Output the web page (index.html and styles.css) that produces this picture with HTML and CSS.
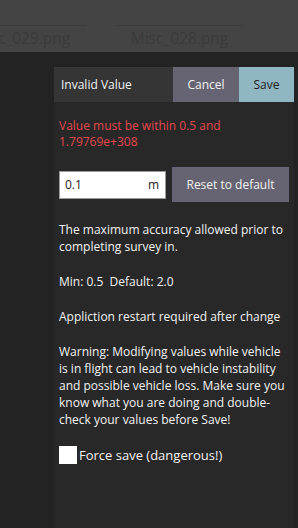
FILE: index.html
```html
<!DOCTYPE html>
<html lang="en">
<head>
  <meta charset="UTF-8">
  <title>Parameter Editor</title>
  <link rel="stylesheet" href="styles.css">
</head>
<body>

  <div class="topbar">
    <div class="thumb thumb-a"><span>c_029.png</span></div>
    <div class="thumb thumb-b"><span>Misc_028.png</span></div>
  </div>

  <div class="dialog">
    <div class="dialog-header">
      <div class="dialog-title">Invalid Value</div>
      <button class="btn btn-cancel">Cancel</button>
      <button class="btn btn-save">Save</button>
    </div>

    <div class="dialog-body">
      <p class="error">Value must be within 0.5 and 1.79769e+308</p>

      <div class="value-row">
        <div class="value-field">
          <span class="value">0.1</span>
          <span class="unit">m</span>
        </div>
        <button class="btn btn-reset">Reset to default</button>
      </div>

      <p>The maximum accuracy allowed prior to completing survey in.</p>
      <p>Min: 0.5&nbsp; Default: 2.0</p>
      <p>Appliction restart required after change</p>
      <p>Warning: Modifying values while vehicle is in flight can lead to vehicle instability and possible vehicle loss. Make sure you know what you are doing and double-check your values before Save!</p>

      <label class="force">
        <span class="checkbox"></span>
        Force save (dangerous!)
      </label>
    </div>
  </div>

</body>
</html>
```

FILE: styles.css
```css
body {
  margin: 0;
  background: #232323;
  font-family: 'Open Sans', sans-serif;
  font-size: 12px;
  color: #f2f2f2;
  height: 528px;
  overflow: hidden;
}

.topbar {
  height: 52px;
  background: #444444;
  position: relative;
  overflow: hidden;
}

.thumb {
  position: absolute;
  top: 25px;
  border-top: 1px solid #3d3d3d;
  color: #3b3b3b;
  font-size: 15.5px;
  line-height: 1;
  padding-top: 5px;
}

.thumb-a {
  left: -8px;
  width: 94px;
}

.thumb-a span {
  margin-left: 6px;
}

.thumb-b {
  left: 116px;
  width: 127px;
  text-align: center;
}

.dialog {
  margin: 15px 4px 0 54px;
  background: #282828;
  height: 461px;
}

.dialog-header {
  display: flex;
  height: 35px;
  background: #353535;
}

.dialog-title {
  flex: 1;
  padding-left: 7px;
  line-height: 35px;
}

.btn {
  border: none;
  font-family: inherit;
  font-size: 12px;
  padding: 0;
  cursor: pointer;
}

.btn-cancel {
  width: 66px;
  background: #666473;
  color: #f2f2f2;
}

.btn-save {
  width: 55px;
  background: #8fb6c1;
  color: #1e1e1e;
}

.dialog-body {
  padding: 0 5px;
}

.dialog-body p {
  margin: 0 0 18px;
  line-height: 17px;
}

.dialog-body .error {
  color: #e4474d;
  margin: 16px 0 17px;
  line-height: 16px;
}

.value-row {
  display: flex;
  align-items: center;
  gap: 6px;
  margin-bottom: 19px;
}

.value-field {
  width: 107px;
  height: 28px;
  background: #ffffff;
  border: 1px solid #9a9a9a;
  color: #1b1b1b;
  display: flex;
  align-items: center;
  justify-content: space-between;
  padding: 0 6px 0 5px;
  box-sizing: border-box;
}

.btn-reset {
  width: 117px;
  height: 35px;
  background: #666473;
  color: #f2f2f2;
}

.force {
  display: flex;
  align-items: center;
  gap: 2px;
  font-size: 13px;
  margin-top: 18px;
}

.checkbox {
  width: 18px;
  height: 18px;
  background: #ffffff;
}
```
